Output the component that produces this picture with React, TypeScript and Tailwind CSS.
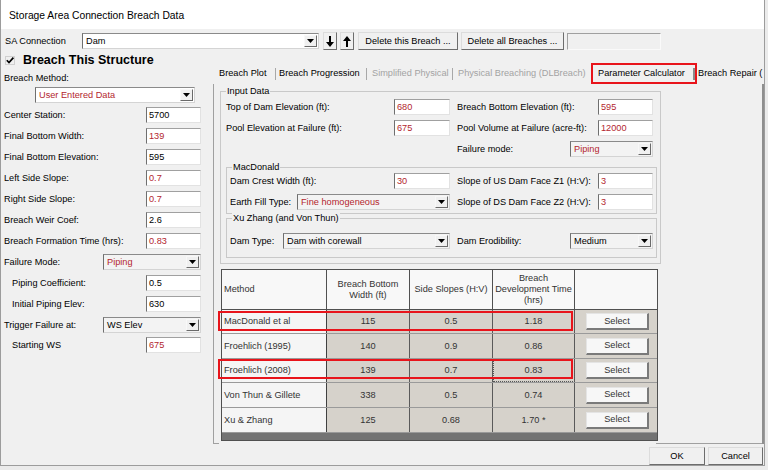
import React from "react";

const RED = "text-[#b3262e]";

function Input({ v, red, w = "w-[55px]" }: { v: string; red?: boolean; w?: string }) {
  return (
    <div
      className={`${w} h-[16px] shrink-0 bg-white border border-t-[#a0a0a0] border-l-[#6f6f6f] border-r-[#e2e2e2] border-b-[#e2e2e2] flex items-center pl-[2px] ${
        red ? RED : "text-black"
      }`}
    >
      {v}
    </div>
  );
}

function DropBtn() {
  return (
    <div className="w-[13px] h-full bg-[#f0f0f0] border border-t-[#f8f8f8] border-l-[#f8f8f8] border-r-[#6a6a6a] border-b-[#6a6a6a] flex items-center justify-center">
      <svg width="7" height="4" viewBox="0 0 7 4">
        <path d="M0 0h7L3.5 4z" fill="#000" />
      </svg>
    </div>
  );
}

function Combo({
  v,
  red,
  w,
  white,
  h = "h-[16px]",
}: {
  v: string;
  red?: boolean;
  w: string;
  white?: boolean;
  h?: string;
}) {
  return (
    <div
      className={`${w} ${h} shrink-0 ${
        white ? "bg-white" : "bg-[#f3f3f3]"
      } border border-t-[#8a8a8a] border-l-[#6f6f6f] border-r-[#d4d4d4] border-b-[#d4d4d4] flex items-stretch`}
    >
      <div className={`flex-1 flex items-center pl-[3px] whitespace-nowrap overflow-hidden ${red ? RED : "text-black"}`}>{v}</div>
      <div className="p-px">
        <DropBtn />
      </div>
    </div>
  );
}

function Btn({ children, w }: { children?: React.ReactNode; w: string }) {
  return (
    <div
      className={`${w} h-full shrink-0 bg-[#f0f0f0] border border-t-[#dcdcdc] border-l-[#dcdcdc] border-r-[#6d6d6d] border-b-[#6d6d6d] flex items-center justify-center whitespace-nowrap`}
    >
      {children}
    </div>
  );
}

function Arrow({ up }: { up?: boolean }) {
  return (
    <svg width="8" height="11" viewBox="0 0 8 11">
      {up ? (
        <path d="M3 11h2V5h3L4 0 0 5h3z" fill="#000" />
      ) : (
        <path d="M3 0h2v6h3l-4 5-4-5h3z" fill="#000" />
      )}
    </svg>
  );
}

function Sep({ thick }: { thick?: boolean }) {
  return <div className={thick ? "w-[2px] h-[12px] bg-[#8a8a8a]" : "w-px h-[12px] bg-[#a8a8a8]"} />;
}

function Row({ children, mt = "mt-[5px]" }: { children: React.ReactNode; mt?: string }) {
  return <div className={`${mt} h-[16px] flex items-center whitespace-nowrap`}>{children}</div>;
}

const leftRows: [string, string, boolean][] = [
  ["Center Station:", "5700", false],
  ["Final Bottom Width:", "139", true],
  ["Final Bottom Elevation:", "595", false],
  ["Left Side Slope:", "0.7", true],
  ["Right Side Slope:", "0.7", true],
  ["Breach Weir Coef:", "2.6", false],
  ["Breach Formation Time (hrs):", "0.83", true],
];

const tableData = [
  ["MacDonald et al", "115", "0.5", "1.18"],
  ["Froehlich (1995)", "140", "0.9", "0.86"],
  ["Froehlich (2008)", "139", "0.7", "0.83"],
  ["Von Thun & Gillete", "338", "0.5", "0.74"],
  ["Xu & Zhang", "125", "0.68", "1.70 *"],
];
const rowH = ["h-[24px]", "h-[25px]", "h-[24px]", "h-[25px]", "h-[25px]"];

export default function App() {
  return (
    <div className="w-[768px] h-[470px] overflow-hidden bg-[#ebebeb] font-['Liberation_Sans',Arial,sans-serif] text-[9.2px] leading-[11px] text-black">
      <div className="w-[765px] h-[466px] bg-[#f0f0f0] border-l border-r border-b border-[#9c9c9c] flex flex-col">
        {/* Title bar */}
        <div className="h-[29px] shrink-0 bg-white flex items-center pl-[8px] pt-[2px] text-[10.3px]">
          Storage Area Connection Breach Data
        </div>

        {/* Toolbar */}
        <div className="mt-[3px] h-[18px] shrink-0 flex items-center">
          <div className="w-[81px] pl-[4px] whitespace-nowrap">SA Connection</div>
          <Combo w="w-[237px]" h="h-[16px]" white v="Dam" />
          <div className="ml-[4px] h-full">
            <Btn w="w-[14px]">
              <Arrow />
            </Btn>
          </div>
          <div className="ml-[3px] h-full">
            <Btn w="w-[14px]">
              <Arrow up />
            </Btn>
          </div>
          <div className="ml-[4px] h-full">
            <Btn w="w-[100px]">Delete this Breach ...</Btn>
          </div>
          <div className="ml-[3px] h-full">
            <Btn w="w-[103px]">Delete all Breaches ...</Btn>
          </div>
          <div className="ml-[3px] w-[94px] h-[17px] bg-[#f0f0f0] border border-t-[#a0a0a0] border-l-[#a0a0a0] border-r-[#fafafa] border-b-[#fafafa]" />
        </div>

        {/* Main */}
        <div className="flex flex-1">
          {/* Left panel */}
          <div className="w-[212px] shrink-0 flex flex-col">
            <div className="mt-[3px] h-[14px] flex items-center pl-[4px]">
              <svg width="10" height="9" viewBox="0 0 10 9">
                <rect x="0.5" y="0.5" width="9" height="8" fill="none" stroke="#d0d0d0" />
                <path d="M1.8 4.2 L4 6.6 L8.4 1.6" fill="none" stroke="#000" strokeWidth="1.7" />
              </svg>
              <span className="ml-[8px] text-[12.5px] leading-[14px] font-bold">Breach This Structure</span>
            </div>
            <div className="mt-[5px] h-[12px] flex items-center pl-[3px]">Breach Method:</div>
            <div className="mt-[3px] ml-[34px]">
              <Combo w="w-[160px]" white red v="User Entered Data" />
            </div>
            {leftRows.map(([l, v, r], i) => (
              <Row key={l} mt={i === 0 ? "mt-[4px]" : "mt-[5px]"}>
                <div className="w-[145px] pl-[3px]">{l}</div>
                <Input v={v} red={r} />
              </Row>
            ))}
            <Row>
              <div className="w-[102px] pl-[3px]">Failure Mode:</div>
              <Combo w="w-[98px]" red v="Piping" />
            </Row>
            <Row>
              <div className="w-[145px] pl-[11px]">Piping Coefficient:</div>
              <Input v="0.5" />
            </Row>
            <Row>
              <div className="w-[145px] pl-[11px]">Initial Piping Elev:</div>
              <Input v="630" />
            </Row>
            <Row>
              <div className="w-[102px] pl-[3px]">Trigger Failure at:</div>
              <Combo w="w-[98px]" v="WS Elev" />
            </Row>
            <Row mt="mt-[4px]">
              <div className="w-[145px] pl-[11px]">Starting WS</div>
              <Input v="675" red />
            </Row>
          </div>

          {/* Right: tab control */}
          <div className="w-[551px] shrink-0 flex flex-col">
            <div className="mt-[13px] h-[21px] shrink-0 flex items-center overflow-hidden whitespace-nowrap">
              <div className="w-[6px] shrink-0" />
              <div className="w-[54px] shrink-0">Breach Plot</div>
              <div className="w-[5px] shrink-0 flex justify-center">
                <Sep />
              </div>
              <div className="w-[85px] shrink-0 pl-[1px]">Breach Progression</div>
              <div className="w-[6px] shrink-0 flex justify-center">
                <Sep />
              </div>
              <div className="w-[81px] shrink-0 pl-[3px] text-[#a3a3a3]">Simplified Physical</div>
              <div className="w-[5px] shrink-0 flex justify-center">
                <Sep />
              </div>
              <div className="w-[136px] shrink-0 pl-[3px] text-[#a3a3a3]">Physical Breaching (DLBreach)</div>
              <div className="w-[106px] shrink-0 h-full border-2 border-[#e8141b] flex items-center justify-between pl-[5px]">
                <span>Parameter Calculator</span>
                <Sep thick />
              </div>
              <div className="shrink-0 pl-[1px]">Breach Repair (</div>
            </div>

            {/* Tab panel */}
            <div className="h-[360px] shrink-0 border-l border-[#a0a0a0] border-r-2 border-r-[#8f8f8f] flex flex-col">
              {/* Input Data group */}
              <div className="ml-[6px] mt-[7px] w-[441px] border border-[#c9c9c9] flex flex-col pl-[5px] pr-[3px] pb-[5px]">
                <div className="-mt-[6px] h-[11px] px-[1px] bg-[#f0f0f0] w-fit">Input Data</div>
                <Row mt="mt-[2px]">
                  <div className="w-[168px]">Top of Dam Elevation (ft):</div>
                  <Input v="680" red w="w-[56px]" />
                  <div className="ml-[7px] w-[141px]">Breach Bottom Elevation (ft):</div>
                  <Input v="595" red />
                </Row>
                <Row>
                  <div className="w-[168px]">Pool Elevation at Failure (ft):</div>
                  <Input v="675" red w="w-[56px]" />
                  <div className="ml-[7px] w-[141px]">Pool Volume at Failure (acre-ft):</div>
                  <Input v="12000" red />
                </Row>
                <Row>
                  <div className="w-[231px] shrink-0" />
                  <div className="w-[113px]">Failure mode:</div>
                  <Combo w="w-[83px]" red v="Piping" />
                </Row>

                {/* MacDonald */}
                <div className="mt-[10px] border border-[#c9c9c9] flex flex-col pl-[3px] pb-[3px]">
                  <div className="-mt-[6px] ml-[2px] h-[11px] px-[1px] bg-[#f0f0f0] w-fit">MacDonald</div>
                  <Row mt="mt-0">
                    <div className="w-[164px]">Dam Crest Width (ft):</div>
                    <Input v="30" red w="w-[56px]" />
                    <div className="ml-[7px] w-[141px]">Slope of US Dam Face Z1 (H:V):</div>
                    <Input v="3" red />
                  </Row>
                  <Row>
                    <div className="w-[67px]">Earth Fill Type:</div>
                    <Combo w="w-[153px]" red v="Fine homogeneous" />
                    <div className="ml-[7px] w-[141px]">Slope of DS Dam Face Z2 (H:V):</div>
                    <Input v="3" red />
                  </Row>
                </div>

                {/* Xu Zhang */}
                <div className="mt-[4px] border border-[#c9c9c9] flex flex-col pl-[3px] pb-[8px]">
                  <div className="-mt-[6px] ml-[2px] h-[11px] px-[1px] bg-[#f0f0f0] w-fit">Xu Zhang (and Von Thun)</div>
                  <Row mt="mt-[9px]">
                    <div className="w-[53px]">Dam Type:</div>
                    <Combo w="w-[167px]" v="Dam with corewall" />
                    <div className="ml-[7px] w-[113px]">Dam Erodibility:</div>
                    <Combo w="w-[83px]" v="Medium" />
                  </Row>
                </div>
              </div>

              {/* Table */}
              <div className="relative ml-[7px] mt-[5px] w-[437px] border border-[#505050] text-[#333]">
                <div className="flex h-[40px] border-b border-[#505050] bg-[#f8f8f8]">
                  <div className="w-[105px] border-r border-[#505050] flex items-center pl-[2px]">Method</div>
                  <div className="w-[83px] border-r border-[#505050] flex items-center justify-center text-center">
                    Breach Bottom
                    <br />
                    Width (ft)
                  </div>
                  <div className="w-[83px] border-r border-[#505050] flex items-center justify-center text-center whitespace-nowrap">
                    Side Slopes (H:V)
                  </div>
                  <div className="w-[82px] border-r border-[#505050] flex items-center justify-center text-center whitespace-nowrap">
                    Breach
                    <br />
                    Development Time
                    <br />
                    (hrs)
                  </div>
                  <div className="w-[82px]" />
                </div>
                {tableData.map((r, i) => (
                  <div key={r[0]} className={`flex ${rowH[i]} border-b border-[#9a9a9a]`}>
                    <div className="w-[105px] border-r border-[#404040] bg-[#f5f5f5] flex items-center pl-[2px] whitespace-nowrap">
                      {r[0]}
                    </div>
                    <div className="w-[83px] border-r border-[#5a5a5a] bg-[#d6d2cb] flex items-center justify-center">{r[1]}</div>
                    <div className="w-[83px] border-r border-[#5a5a5a] bg-[#d6d2cb] flex items-center justify-center">{r[2]}</div>
                    <div
                      className={`w-[82px] border-r border-[#5a5a5a] bg-[#d6d2cb] flex items-center justify-center ${
                        i === 2 ? "outline-1 outline-dotted outline-[#555] -outline-offset-1" : ""
                      }`}
                    >
                      {r[3]}
                    </div>
                    <div className="w-[82px] bg-[#d6d2cb] flex items-center pl-[11px]">
                      <div className="w-[63px] h-[17px] bg-[#f7f7f7] border border-t-[#e4e4e4] border-l-[#e4e4e4] border-r-2 border-b-2 border-r-[#7a7a7a] border-b-[#7a7a7a] flex items-center justify-center">
                        Select
                      </div>
                    </div>
                  </div>
                ))}
                <div className="h-[7px] bg-[#737373]" />
                <div className="absolute left-[-4px] top-[41px] w-[355px] h-[20px] border-2 border-[#e8141b]" />
                <div className="absolute left-[-4px] top-[89px] w-[355px] h-[20px] border-2 border-[#e8141b]" />
              </div>

              {/* bottom edge pieces */}
              <div className="mt-auto h-px flex">
                <div className="w-[5px] bg-[#a0a0a0]" />
                <div className="flex-1" />
                <div className="w-[106px] bg-[#a0a0a0]" />
              </div>
            </div>

            {/* OK / Cancel */}
            <div className="mt-[3px] h-[18px] shrink-0 flex justify-end gap-[3px] pr-[1px]">
              <Btn w="w-[56px]">OK</Btn>
              <Btn w="w-[55px]">Cancel</Btn>
            </div>
          </div>
        </div>
      </div>
    </div>
  );
}
